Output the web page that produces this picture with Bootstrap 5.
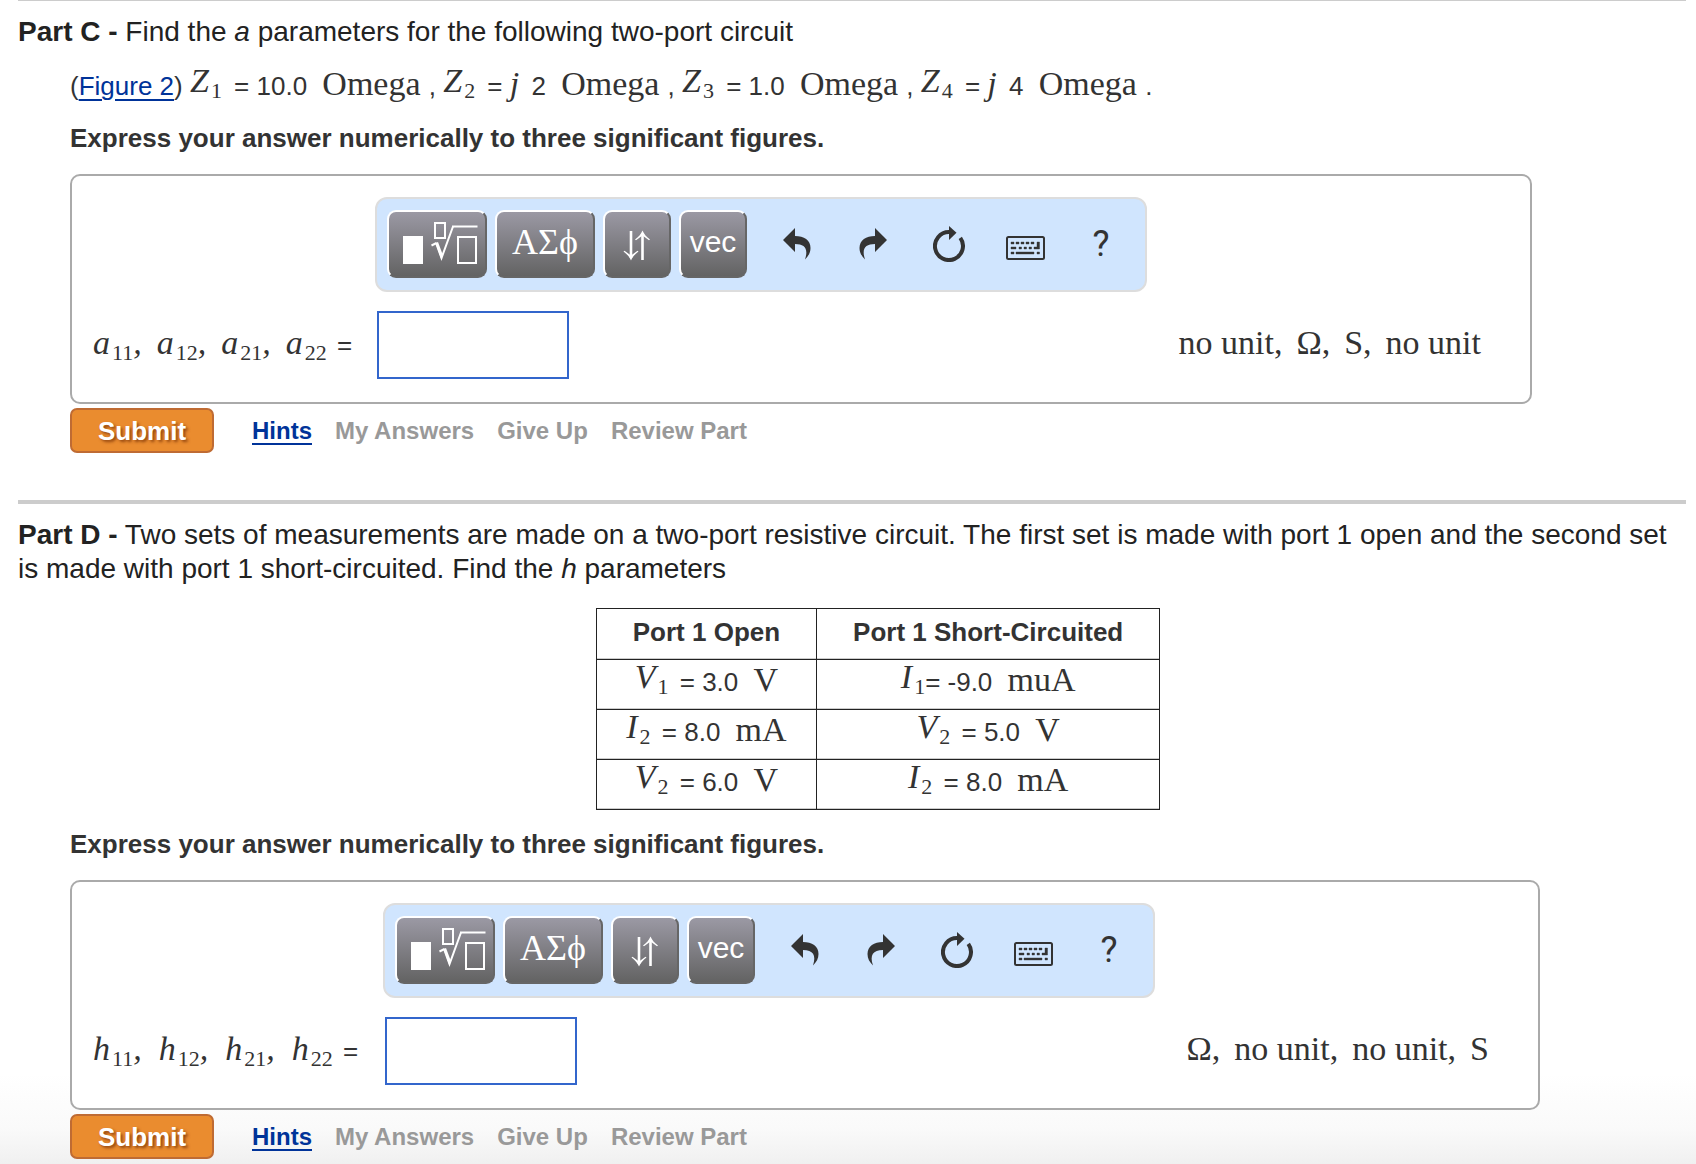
<!DOCTYPE html>
<html lang="en">
<head>
<meta charset="utf-8">
<meta name="viewport" content="width=device-width, initial-scale=1">
<title>Two-port circuit parameters</title>
<link href="https://cdn.jsdelivr.net/npm/bootstrap@5.3.0/dist/css/bootstrap.min.css" rel="stylesheet">
<style>
  body { font-family: "Liberation Sans", Arial, sans-serif; font-size: 26px; line-height: 34px; color: #333; background: #fff; }
  .page { min-height: 100vh; padding: 0 10px 4px 18px; background: linear-gradient(to top, #f0f0f0, #fafafa 36px, rgba(255,255,255,0) 90px) no-repeat; }
  .part-c { border-top: 1px solid #ccc; padding-top: 14px; }
  .part-d { border-top: 4px solid #ccc; padding-top: 14px; margin-top: 47px; }
  .part-title { font-size: 28px; line-height: 34px; color: #222; margin: 0; font-weight: 400; }
  .part-body { padding-left: 52px; }
  .formula { margin: 20px 0 18px; }
  .instruct { font-size: 26px; font-weight: 700; margin: 0 0 19px; }
  .formula a, .actions a { color: #039; text-underline-offset: 4px; text-decoration-thickness: 2px; }
  /* math */
  .mv, .mu { font-family: "Liberation Serif", "Times New Roman", serif; font-size: 34px; line-height: 0; }
  .mv { font-style: italic; }
  .mv sub { font-style: normal; font-size: 22px; line-height: 0; bottom: auto; vertical-align: -6px; margin-left: 2px; }
  .formula .mv { margin-right: 5px; }
  .raised { vertical-align: 3px; }
  .measures .raised { margin-right: 4px; }
  .measures .tight { margin-right: 0; }
  .mu { margin-left: 8px; }
  .formula .mu { margin-right: 1px; }
  /* answer box */
  .answer-box { display: grid; width: fit-content; border: 2px solid #aaa; border-radius: 10px; background: #fff; padding: 21px 49px 23px 21px; row-gap: 19px; }
  .box-a { grid-template-columns: minmax(282px, auto) auto minmax(334px, auto); }
  .box-h { grid-template-columns: minmax(290px, auto) auto minmax(334px, auto); }
  .toolbar { grid-column: 2; border: 2px solid #ddd; border-radius: 12px; background: #d0e5fe; padding: 11px 10px 12px; }
  .answer-label { grid-column: 1; }
  .answer-label .mv { margin-right: 3px; }
  .box-a .mv + .mv { margin-left: 12px; }
  .box-h .mv + .mv { margin-left: 14px; }
  .answer-input { width: 192px; height: 68px; border: 2px solid #36c; background: #fff; margin-left: 2px; padding: 4px 10px; }
  .units { justify-self: end; }
  .units .mu + .mu { margin-left: 14px; }
  .tool { height: 68px; width: 68px; padding: 0; border: 2px solid; border-color: #fff #666 #666 #fff; border-radius: 9px; background: linear-gradient(#9b99a4, #636363); color: #fff; font-size: 30px; line-height: 34px; display: flex; align-items: center; justify-content: center; }
  .tool-wide { width: 100px; }
  .greek { font-family: "Liberation Serif", serif; font-size: 36px; }
  .tool-txt { padding-bottom: 4px; }
  .tool-icon { width: 68px; height: 68px; padding: 0; border: 0; background: none; color: #333; display: flex; align-items: center; justify-content: center; }
  .help { font-family: Roboto, sans-serif; font-size: 36px; font-weight: 400; }
  .gap-icons { margin-left: 8px; }
  .actions { margin-top: 4px; font-size: 24px; font-weight: 700; color: #999; gap: 23px; }
  .submit { width: 144px; height: 45px; padding: 0; margin-right: 15px; border: 2px solid #bf6b33; border-radius: 7px; background: #ea8c2f; color: #fff; font-size: 26px; font-weight: 700; line-height: 34px; text-shadow: 2px 2px 3px rgba(110,40,0,.7); }
  .measures { margin: 22px auto 17px; text-align: center; border-collapse: collapse; }
  .measures th, .measures td { border: 1px solid #222; padding: 5px 24px 10px; box-shadow: inset 0 -1px #ccc; white-space: nowrap; }
  .measures th { padding: 6px 36px 10px; }
</style>
</head>
<body>
<svg width="0" height="0" class="d-none" aria-hidden="true">
  <symbol id="i-root" viewBox="0 0 96 64">
    <rect x="14" y="24" width="20" height="28" fill="#fff"/>
    <g fill="none" stroke="#fff" stroke-width="2">
      <rect x="46" y="11" width="10" height="15"/>
      <rect x="69" y="25" width="18" height="26"/>
      <path d="M42.500 33.500l5-2.500M63 14.500h25.500"/>
      <path d="M47 31l5.500 15L64 14.500"/>
    </g>
    <path d="M46.500 31l2.500-1 4.500 12-1 6z" fill="#fff"/>
  </symbol>
  <symbol id="i-updown" viewBox="0 0 64 64">
    <g fill="none" stroke="#fff" stroke-width="2.600"><path d="M26 19v27M37.500 48V21"/></g>
    <path d="M26 48.500c-1.500-3.500-4-6.500-7.500-9l1-.8 6.500 4.800 6.500-4.800 1 .8c-3.500 2.500-6 5.500-7.500 9zM37.500 18.500c1.500 3.500 4 6.500 7.500 9l-1 .8-6.500-4.800-6.500 4.800-1-.8c3.500-2.500 6-5.500 7.500-9z" fill="#fff"/>
  </symbol>
  <symbol id="i-undo" viewBox="0 0 28 32">
    <path d="M0 12L12 0v8c9 0 15.500 4 15.500 12 0 4.500-2 8-5.500 11.500C25.500 21 22 16 12 16v8z" fill="#333"/>
  </symbol>
  <symbol id="i-redo" viewBox="0 0 28 32">
    <path d="M28 12L16 0v8C7 8 .5 12 .5 20c0 4.500 2 8 5.500 11.500C2.500 21 6 16 16 16v8z" fill="#333"/>
  </symbol>
  <symbol id="i-reset" viewBox="0 0 32 36">
    <path d="M27.300 11.800A14 14 0 1 1 16 6" fill="none" stroke="#333" stroke-width="4"/>
    <path d="M16 0l7.500 6.800L16 14z" fill="#333"/>
  </symbol>
  <symbol id="i-keys" viewBox="0 0 39 24">
    <rect x="1" y="1" width="37" height="22" rx="1.500" fill="none" stroke="#333" stroke-width="2"/>
    <path d="M5 6h3v2H5zM10 6h3v2h-3zM15 6h3v2h-3zM20 6h3v2h-3zM25 6h3v2h-3zM31 6h2.500v7H28v-2h3zM5 11h5v2H5zM13 11h2.500v2H13zM18 11h2.500v2H18zM23 11h2.500v2H23zM5 16h3v2H5zM10 16h18v2H10zM31 16h2.500v2H31z" fill="#333" stroke="#333" stroke-width=".4"/>
  </symbol>
</svg>

<main class="page">
  <section class="part-c">
    <h2 class="part-title"><b>Part C -</b> Find the <i>a</i> parameters for the following two-port circuit</h2>
    <div class="part-body">
      <p class="formula">(<a href="#figure2">Figure 2</a>) <span class="mv raised">Z<sub>1</sub></span> = 10.0 <span class="mu">Omega</span> , <span class="mv raised">Z<sub>2</sub></span> = <span class="mv">j</span> 2 <span class="mu">Omega</span> , <span class="mv raised">Z<sub>3</sub></span> = 1.0 <span class="mu">Omega</span> , <span class="mv raised">Z<sub>4</sub></span> = <span class="mv">j</span> 4 <span class="mu">Omega</span> .</p>
      <p class="instruct">Express your answer numerically to three significant figures.</p>
      <div class="answer-box box-a align-items-center">
        <div class="toolbar d-flex gap-2" role="toolbar" aria-label="Math input">
          <button type="button" class="tool tool-wide" aria-label="Templates"><svg width="96" height="64"><use href="#i-root"/></svg></button>
          <button type="button" class="tool tool-wide tool-txt greek">ΑΣϕ</button>
          <button type="button" class="tool" aria-label="Sub and superscripts"><svg width="64" height="64"><use href="#i-updown"/></svg></button>
          <button type="button" class="tool tool-txt">vec</button>
          <button type="button" class="tool-icon gap-icons" aria-label="Undo"><svg width="28" height="32"><use href="#i-undo"/></svg></button>
          <button type="button" class="tool-icon" aria-label="Redo"><svg width="28" height="32"><use href="#i-redo"/></svg></button>
          <button type="button" class="tool-icon" aria-label="Reset"><svg width="32" height="36"><use href="#i-reset"/></svg></button>
          <button type="button" class="tool-icon pt-2" aria-label="Keyboard shortcuts"><svg width="39" height="24"><use href="#i-keys"/></svg></button>
          <button type="button" class="tool-icon help">?</button>
        </div>
        <label class="answer-label" for="ans-c"><span class="mv">a<sub>11</sub>,</span><span class="mv">a<sub>12</sub>,</span><span class="mv">a<sub>21</sub>,</span><span class="mv">a<sub>22</sub></span> =</label>
        <input class="answer-input" id="ans-c" type="text">
        <div class="units"><span class="mu">no unit,</span><span class="mu">Ω,</span><span class="mu">S,</span><span class="mu">no unit</span></div>
      </div>
      <div class="actions d-flex align-items-center">
        <button type="submit" class="submit">Submit</button>
        <a href="#hints-c">Hints</a><span>My Answers</span><span>Give Up</span><span>Review Part</span>
      </div>
    </div>
  </section>

  <section class="part-d">
    <h2 class="part-title"><b>Part D -</b> Two sets of measurements are made on a two-port resistive circuit. The first set is made with port 1 open and the second set is made with port 1 short-circuited. Find the <i>h</i> parameters</h2>
    <div class="part-body">
      <table class="measures">
        <thead><tr><th>Port 1 Open</th><th>Port 1 Short-Circuited</th></tr></thead>
        <tbody>
          <tr><td><span class="mv raised">V<sub>1</sub></span> = 3.0 <span class="mu">V</span></td><td><span class="mv raised tight">I<sub>1</sub></span>= -9.0 <span class="mu">muA</span></td></tr>
          <tr><td><span class="mv raised">I<sub>2</sub></span> = 8.0 <span class="mu">mA</span></td><td><span class="mv raised">V<sub>2</sub></span> = 5.0 <span class="mu">V</span></td></tr>
          <tr><td><span class="mv raised">V<sub>2</sub></span> = 6.0 <span class="mu">V</span></td><td><span class="mv raised">I<sub>2</sub></span> = 8.0 <span class="mu">mA</span></td></tr>
        </tbody>
      </table>
      <p class="instruct">Express your answer numerically to three significant figures.</p>
      <div class="answer-box box-h align-items-center">
        <div class="toolbar d-flex gap-2" role="toolbar" aria-label="Math input">
          <button type="button" class="tool tool-wide" aria-label="Templates"><svg width="96" height="64"><use href="#i-root"/></svg></button>
          <button type="button" class="tool tool-wide tool-txt greek">ΑΣϕ</button>
          <button type="button" class="tool" aria-label="Sub and superscripts"><svg width="64" height="64"><use href="#i-updown"/></svg></button>
          <button type="button" class="tool tool-txt">vec</button>
          <button type="button" class="tool-icon gap-icons" aria-label="Undo"><svg width="28" height="32"><use href="#i-undo"/></svg></button>
          <button type="button" class="tool-icon" aria-label="Redo"><svg width="28" height="32"><use href="#i-redo"/></svg></button>
          <button type="button" class="tool-icon" aria-label="Reset"><svg width="32" height="36"><use href="#i-reset"/></svg></button>
          <button type="button" class="tool-icon pt-2" aria-label="Keyboard shortcuts"><svg width="39" height="24"><use href="#i-keys"/></svg></button>
          <button type="button" class="tool-icon help">?</button>
        </div>
        <label class="answer-label" for="ans-d"><span class="mv">h<sub>11</sub>,</span><span class="mv">h<sub>12</sub>,</span><span class="mv">h<sub>21</sub>,</span><span class="mv">h<sub>22</sub></span> =</label>
        <input class="answer-input" id="ans-d" type="text">
        <div class="units"><span class="mu">Ω,</span><span class="mu">no unit,</span><span class="mu">no unit,</span><span class="mu">S</span></div>
      </div>
      <div class="actions d-flex align-items-center">
        <button type="submit" class="submit">Submit</button>
        <a href="#hints-d">Hints</a><span>My Answers</span><span>Give Up</span><span>Review Part</span>
      </div>
    </div>
  </section>
</main>
<script src="https://cdn.jsdelivr.net/npm/bootstrap@5.3.0/dist/js/bootstrap.bundle.min.js"></script>
</body>
</html>
